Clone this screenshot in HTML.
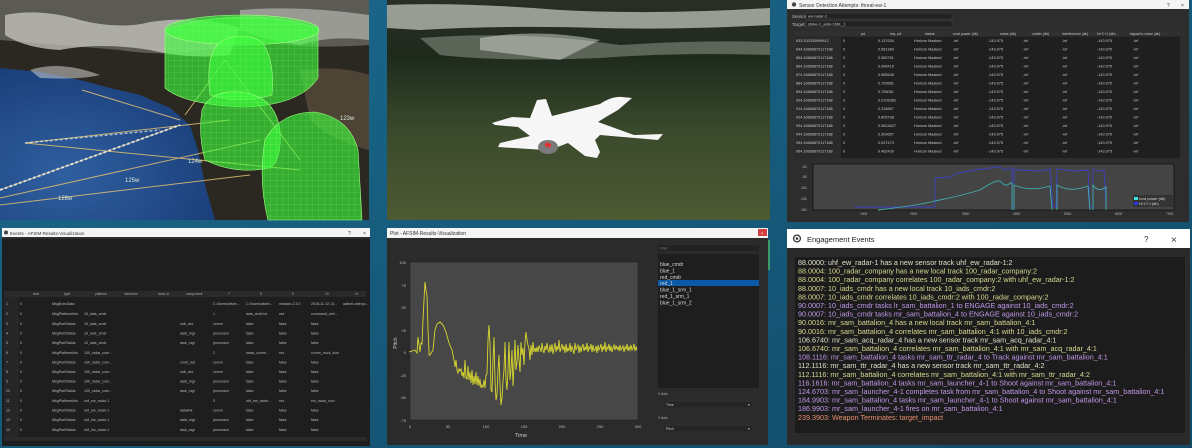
<!DOCTYPE html>
<html><head><meta charset="utf-8"><style>
html,body{margin:0;padding:0;width:1192px;height:448px;overflow:hidden;background:#17587a}
svg{display:block}
text{font-family:"Liberation Sans",sans-serif}
</style></head><body>
<svg width="1192" height="448" viewBox="0 0 1192 448" xmlns="http://www.w3.org/2000/svg">
<defs>
<linearGradient id="bg" x1="0" y1="0" x2="1" y2="1"><stop offset="0" stop-color="#1b6a8e"/><stop offset="1" stop-color="#124a68"/></linearGradient>
<linearGradient id="sky3d" x1="0" y1="0" x2="0" y2="1"><stop offset="0" stop-color="#2a2e26"/><stop offset="0.25" stop-color="#1e2a1c"/><stop offset="0.6" stop-color="#3a4a2c"/><stop offset="1" stop-color="#4d5a32"/></linearGradient>
<radialGradient id="ocean" cx="0.3" cy="0.7" r="0.8"><stop offset="0" stop-color="#2f5fa0"/><stop offset="1" stop-color="#1a3d78"/></radialGradient>
<pattern id="grid" width="6" height="6" patternUnits="userSpaceOnUse"><path d="M0 0H6M0 0V6" stroke="#a0ff80" stroke-width="0.5" fill="none"/></pattern>
</defs>
<rect width="1192" height="448" fill="url(#bg)"/>

<!-- Panel 1: map -->
<g>
<rect x="0" y="0" width="369" height="220" fill="#2a2820"/>
<path d="M0 68 L40 72 L80 80 L110 88 L140 95 L170 108 L190 125 L198 150 L205 185 L215 220 L0 220Z" fill="url(#ocean)"/>
<path d="M0 0 H369 V45 Q300 50 250 40 Q180 60 120 50 Q60 45 0 40Z" fill="#5b5a54"/>
<path d="M5 15 Q40 8 80 20 Q120 30 150 22 Q200 15 240 28 L230 55 Q190 60 150 50 Q100 42 60 50 Q25 48 5 35Z" fill="#c8c8c2" opacity="0.75"/>
<path d="M240 10 Q300 5 369 15 V40 Q330 35 300 45 Q265 40 240 30Z" fill="#b5b5b0" opacity="0.7"/>
<path d="M30 70 Q60 60 100 75 Q80 80 40 78Z" fill="#ddd" opacity="0.5"/>
<path d="M300 70 Q340 65 369 75 V150 Q330 140 310 120Z" fill="#5e5040" opacity="0.7"/>
<g stroke="#e0c070" stroke-width="1" opacity="0.85" fill="none">
<line x1="82" y1="90" x2="180" y2="120"/><line x1="25" y1="143" x2="230" y2="120"/><line x1="0" y1="190" x2="180" y2="125"/>
<line x1="0" y1="198" x2="260" y2="140"/><line x1="0" y1="205" x2="250" y2="175"/><line x1="25" y1="143" x2="300" y2="170"/>
<line x1="185" y1="115" x2="225" y2="60"/><line x1="225" y1="60" x2="300" y2="160"/>
</g>
<line x1="0" y1="190" x2="180" y2="125" stroke="#fff" stroke-width="2" stroke-dasharray="3 2" opacity="0.7"/>
<line x1="25" y1="143" x2="160" y2="130" stroke="#fff" stroke-width="1.5" stroke-dasharray="3 2" opacity="0.6"/>
<g fill="#3cff3c" fill-opacity="0.62" stroke="#9fff7f" stroke-width="0.6">
<path d="M165 30 Q240 5 318 28 L318 78 Q300 105 245 107 Q185 105 165 88Z"/>
<ellipse cx="242" cy="30" rx="77" ry="15"/>
<path d="M210 95 Q205 55 220 42 Q242 30 262 42 Q275 60 272 95 Q240 105 210 95Z"/>
<path d="M202 110 Q210 90 240 92 Q275 95 280 130 Q282 160 270 168 Q235 175 205 160 Q198 135 202 110Z"/>
<path d="M265 140 Q280 112 315 112 Q350 118 358 150 L362 220 H268 Q258 180 265 140Z"/>
</g>
<g fill="url(#grid)" opacity="0.5">
<path d="M165 30 Q240 5 318 28 L318 78 Q300 105 245 107 Q185 105 165 88Z"/>
<path d="M202 110 Q210 90 240 92 Q275 95 280 130 Q282 160 270 168 Q235 175 205 160 Q198 135 202 110Z"/>
<path d="M265 140 Q280 112 315 112 Q350 118 358 150 L362 220 H268 Q258 180 265 140Z"/>
</g>
<g fill="#d8e8d8" font-size="6" font-family="Liberation Serif"><text x="125" y="182">125w</text><text x="58" y="200">128w</text><text x="188" y="163">124w</text><text x="340" y="120">123w</text></g>
</g>

<!-- Panel 2: 3D -->
<g>
<rect x="387" y="0" width="383" height="220" fill="url(#sky3d)"/>
<path d="M387 5 Q460 2 560 10 Q660 15 770 8 V25 Q680 30 600 28 Q500 25 420 30 L387 28Z" fill="#bfc3bb" opacity="0.75"/>
<path d="M420 38 Q520 30 620 45 Q700 40 770 42 V55 Q680 52 600 58 Q500 62 440 55Z" fill="#9aa094" opacity="0.5"/>
<path d="M480 38 Q540 28 600 40 L560 60 Q520 55 480 50Z" fill="#d8dcd2" opacity="0.5"/>
<g fill="#f6f6f6">
<path d="M492 123 L512 117 L530 118 L537 100 L546 99 L552 116 L600 104 Q612 96 622 97 L632 98 L618 110 Q604 118 598 122 L634 135 L663 134 L658 140 L600 135 L595 140 L600 152 L597 158 L585 156 L568 143 L555 148 L545 150 L498 147 L500 143 L530 136 L518 127 L495 125Z"/>
</g>
<ellipse cx="548" cy="147" rx="10" ry="7" fill="#7a7a7a"/>
<rect x="545" y="143" width="6" height="4" fill="#e53030" transform="rotate(20 548 145)"/>
</g>

<!-- Panel 3: Sensor Detection -->
<g>
<rect x="787" y="0" width="402" height="222" fill="#2d2d2d"/>
<rect x="787" y="0" width="402" height="9" fill="#f4f4f4"/>
<circle cx="794" cy="4.5" r="2.2" fill="#444"/>
<text x="799" y="7" font-size="5" fill="#333">Sensor Detection Attempts: threat-ew-1</text>
<text x="1167" y="7" font-size="5" fill="#333">?</text><text x="1181" y="7" font-size="5" fill="#333">×</text>
<text x="792" y="18" font-size="4.5" fill="#bbb">Sensor:</text>
<rect x="806" y="13" width="146" height="6" fill="#222" stroke="#444" stroke-width="0.5"/><text x="808" y="17.5" font-size="4" fill="#ccc">ew radar-1</text>
<text x="792" y="26" font-size="4.5" fill="#bbb">Target:</text>
<rect x="806" y="21" width="146" height="6" fill="#222" stroke="#444" stroke-width="0.5"/><text x="808" y="25.5" font-size="4" fill="#ccc">strike-1_adm-160L_1</text>
<rect x="795" y="31" width="385" height="127" fill="#1f1f1f"/>
<rect x="795" y="31" width="385" height="5.5" fill="#303030"/>
<rect x="795" y="36" width="46" height="122" fill="#2a2a2a"/>
<g font-size="3.6" fill="#c8c8c8">
<text x="861" y="35">pd</text><text x="890" y="35">req. pd</text><text x="925" y="35">status</text><text x="953" y="35">rcvd power (db)</text><text x="1000" y="35">noise (db)</text><text x="1032" y="35">clutter (db)</text><text x="1062" y="35">interference (db)</text><text x="1097" y="35">N+C+J (db)</text><text x="1130" y="35">signal to noise (db)</text>
</g>
<g font-size="3.8" fill="#c8c8c8">
<text y="42"><tspan x="796">833.333333999812</tspan><tspan x="843">0</tspan><tspan x="878">0.137634</tspan><tspan x="914">Horizon Masked</tspan><tspan x="953">-inf</tspan><tspan x="988">-143.975</tspan><tspan x="1023">-inf</tspan><tspan x="1062">-inf</tspan><tspan x="1097">-143.975</tspan><tspan x="1133">-inf</tspan></text>
<text y="50.5"><tspan x="796">844.16666870117188</tspan><tspan x="843">0</tspan><tspan x="878">0.581384</tspan><tspan x="914">Horizon Masked</tspan><tspan x="953">-inf</tspan><tspan x="988">-143.975</tspan><tspan x="1023">-inf</tspan><tspan x="1062">-inf</tspan><tspan x="1097">-143.975</tspan><tspan x="1133">-inf</tspan></text>
<text y="59"><tspan x="796">854.16666870117188</tspan><tspan x="843">0</tspan><tspan x="878">0.580751</tspan><tspan x="914">Horizon Masked</tspan><tspan x="953">-inf</tspan><tspan x="988">-143.975</tspan><tspan x="1023">-inf</tspan><tspan x="1062">-inf</tspan><tspan x="1097">-143.975</tspan><tspan x="1133">-inf</tspan></text>
<text y="67.5"><tspan x="796">864.16666870117188</tspan><tspan x="843">0</tspan><tspan x="878">0.996415</tspan><tspan x="914">Horizon Masked</tspan><tspan x="953">-inf</tspan><tspan x="988">-143.975</tspan><tspan x="1023">-inf</tspan><tspan x="1062">-inf</tspan><tspan x="1097">-143.975</tspan><tspan x="1133">-inf</tspan></text>
<text y="76"><tspan x="796">874.16666870117188</tspan><tspan x="843">0</tspan><tspan x="878">0.985648</tspan><tspan x="914">Horizon Masked</tspan><tspan x="953">-inf</tspan><tspan x="988">-143.975</tspan><tspan x="1023">-inf</tspan><tspan x="1062">-inf</tspan><tspan x="1097">-143.975</tspan><tspan x="1133">-inf</tspan></text>
<text y="84.5"><tspan x="796">884.16666870117188</tspan><tspan x="843">0</tspan><tspan x="878">0.729581</tspan><tspan x="914">Horizon Masked</tspan><tspan x="953">-inf</tspan><tspan x="988">-143.975</tspan><tspan x="1023">-inf</tspan><tspan x="1062">-inf</tspan><tspan x="1097">-143.975</tspan><tspan x="1133">-inf</tspan></text>
<text y="93"><tspan x="796">894.16666870117188</tspan><tspan x="843">0</tspan><tspan x="878">0.728081</tspan><tspan x="914">Horizon Masked</tspan><tspan x="953">-inf</tspan><tspan x="988">-143.975</tspan><tspan x="1023">-inf</tspan><tspan x="1062">-inf</tspan><tspan x="1097">-143.975</tspan><tspan x="1133">-inf</tspan></text>
<text y="101.5"><tspan x="796">904.16666870117188</tspan><tspan x="843">0</tspan><tspan x="878">0.0106362</tspan><tspan x="914">Horizon Masked</tspan><tspan x="953">-inf</tspan><tspan x="988">-143.975</tspan><tspan x="1023">-inf</tspan><tspan x="1062">-inf</tspan><tspan x="1097">-143.975</tspan><tspan x="1133">-inf</tspan></text>
<text y="110"><tspan x="796">914.16666870117188</tspan><tspan x="843">0</tspan><tspan x="878">0.318867</tspan><tspan x="914">Horizon Masked</tspan><tspan x="953">-inf</tspan><tspan x="988">-143.975</tspan><tspan x="1023">-inf</tspan><tspan x="1062">-inf</tspan><tspan x="1097">-143.975</tspan><tspan x="1133">-inf</tspan></text>
<text y="118.5"><tspan x="796">924.16666870117188</tspan><tspan x="843">0</tspan><tspan x="878">0.805798</tspan><tspan x="914">Horizon Masked</tspan><tspan x="953">-inf</tspan><tspan x="988">-143.975</tspan><tspan x="1023">-inf</tspan><tspan x="1062">-inf</tspan><tspan x="1097">-143.975</tspan><tspan x="1133">-inf</tspan></text>
<text y="127"><tspan x="796">934.16666870117188</tspan><tspan x="843">0</tspan><tspan x="878">0.0824627</tspan><tspan x="914">Horizon Masked</tspan><tspan x="953">-inf</tspan><tspan x="988">-143.975</tspan><tspan x="1023">-inf</tspan><tspan x="1062">-inf</tspan><tspan x="1097">-143.975</tspan><tspan x="1133">-inf</tspan></text>
<text y="135.5"><tspan x="796">944.16666870117188</tspan><tspan x="843">0</tspan><tspan x="878">0.309657</tspan><tspan x="914">Horizon Masked</tspan><tspan x="953">-inf</tspan><tspan x="988">-143.975</tspan><tspan x="1023">-inf</tspan><tspan x="1062">-inf</tspan><tspan x="1097">-143.975</tspan><tspan x="1133">-inf</tspan></text>
<text y="144"><tspan x="796">954.16666870117188</tspan><tspan x="843">0</tspan><tspan x="878">0.637473</tspan><tspan x="914">Horizon Masked</tspan><tspan x="953">-inf</tspan><tspan x="988">-143.975</tspan><tspan x="1023">-inf</tspan><tspan x="1062">-inf</tspan><tspan x="1097">-143.975</tspan><tspan x="1133">-inf</tspan></text>
<text y="152.5"><tspan x="796">964.16666870117188</tspan><tspan x="843">0</tspan><tspan x="878">0.462439</tspan><tspan x="914">Horizon Masked</tspan><tspan x="953">-inf</tspan><tspan x="988">-143.975</tspan><tspan x="1023">-inf</tspan><tspan x="1062">-inf</tspan><tspan x="1097">-143.975</tspan><tspan x="1133">-inf</tspan></text>
</g>
<rect x="813" y="164" width="361" height="46" fill="#444" stroke="#111" stroke-width="0.8"/>
<g font-size="3.3" fill="#bbb"><text x="802" y="168">-60</text><text x="802" y="178">-80</text><text x="800" y="189">-100</text><text x="800" y="200">-130</text><text x="800" y="211">-150</text>
<text x="860" y="215">1000</text><text x="910" y="215">2000</text><text x="962" y="215">3000</text><text x="1013" y="215">4000</text><text x="1064" y="215">5000</text><text x="1115" y="215">6000</text><text x="1166" y="215">7000</text></g>
<path d="M855 207 L935 207 L935 178 L950 177 L955 174 L965 172 L975 170 L990 168 L1000 167 L1005 170 L1010 168 L1012 168 L1012 207 L1014 207 L1014 169 L1020 170 L1040 171 L1050 169 L1053 207 L1056 207 L1057 169 L1075 171 L1088 170 L1090 207 L1093 207 L1093 169 L1098 171 L1104 170 L1106 207" fill="none" stroke="#4040c0" stroke-width="0.9"/>
<path d="M878 210 Q920 205 935 201 Q960 196 980 190 Q995 180 1000 181 Q1006 188 1010 183 L1012 183 L1012 210 M1014 210 L1014 185 Q1030 192 1050 186 L1052 210 M1057 210 L1057 185 Q1070 193 1088 186 L1090 210 M1093 210 L1093 185 Q1098 193 1106 187 L1106 210" fill="none" stroke="#40b0b0" stroke-width="0.9"/>
<rect x="1133" y="195" width="40" height="12" fill="#333"/>
<rect x="1134" y="197" width="4" height="3" fill="#40e0e0"/><text x="1139" y="200" font-size="3.8" fill="#ddd">rcvd power (db)</text>
<rect x="1134" y="202" width="4" height="3" fill="#3030e0"/><text x="1139" y="205" font-size="3.8" fill="#ddd">N+C+J (db)</text>
</g>

<!-- Panel 4: Events -->
<g>
<rect x="2" y="228" width="368" height="218" fill="#1e1e1e"/>
<rect x="2" y="228" width="368" height="9" fill="#f4f4f4"/>
<circle cx="6" cy="232.5" r="2" fill="#444"/>
<text x="10" y="235" font-size="4.5" fill="#333">Events - AFSIM-Results-Visualization</text>
<text x="348" y="235" font-size="5" fill="#333">?</text><text x="363" y="235" font-size="5" fill="#333">×</text>
<rect x="2" y="237" width="368" height="2" fill="#2d2d2d"/>
<rect x="4" y="291" width="362" height="6" fill="#2a2a2a"/>
<g font-size="3.3" fill="#aaa"><text x="33" y="295">time</text><text x="64" y="295">type</text><text x="95" y="295">platform</text><text x="124" y="295">interactor</text><text x="158" y="295">track id</text><text x="186" y="295">component</text><text x="228" y="295">7</text><text x="260" y="295">8</text><text x="292" y="295">9</text><text x="325" y="295">10</text><text x="355" y="295">11</text></g>
<rect x="4" y="297" width="15" height="140" fill="#262626"/>
<g font-size="3.6" fill="#bbb">
<text y="305"><tspan x="6">1</tspan><tspan x="20">0</tspan><tspan x="52">MsgExecData</tspan><tspan x="213">C:/Users/afsim...</tspan><tspan x="246">C:/Users/afsim...</tspan><tspan x="279">mission-2.3.0</tspan><tspan x="311">2018-11-12 13...</tspan><tspan x="343">aafsim-interpo...</tspan></text>
<text y="315"><tspan x="6">2</tspan><tspan x="20">0</tspan><tspan x="52">MsgPlatformInfo</tspan><tspan x="84">10_iads_cmdr</tspan><tspan x="213">1</tspan><tspan x="246">iads_cmdr.txt</tspan><tspan x="279">red</tspan><tspan x="311">command_veh...</tspan></text>
<text y="325"><tspan x="6">3</tspan><tspan x="20">0</tspan><tspan x="52">MsgPartStatus</tspan><tspan x="84">10_iads_cmdr</tspan><tspan x="180">sub_net</tspan><tspan x="213">comm</tspan><tspan x="246">false</tspan><tspan x="279">false</tspan><tspan x="311">false</tspan></text>
<text y="334.5"><tspan x="6">4</tspan><tspan x="20">0</tspan><tspan x="52">MsgPartStatus</tspan><tspan x="84">10_iads_cmdr</tspan><tspan x="180">data_mgr</tspan><tspan x="213">processor</tspan><tspan x="246">false</tspan><tspan x="279">false</tspan><tspan x="311">false</tspan></text>
<text y="344"><tspan x="6">5</tspan><tspan x="20">0</tspan><tspan x="52">MsgPartStatus</tspan><tspan x="84">10_iads_cmdr</tspan><tspan x="180">task_mgr</tspan><tspan x="213">processor</tspan><tspan x="246">false</tspan><tspan x="279">false</tspan><tspan x="311">false</tspan></text>
<text y="354"><tspan x="6">6</tspan><tspan x="20">0</tspan><tspan x="52">MsgPlatformInfo</tspan><tspan x="84">100_radar_com...</tspan><tspan x="213">2</tspan><tspan x="246">ksaw_comm...</tspan><tspan x="279">red</tspan><tspan x="311">comm_truck_icon</tspan></text>
<text y="363.5"><tspan x="6">7</tspan><tspan x="20">0</tspan><tspan x="52">MsgPartStatus</tspan><tspan x="84">100_radar_com...</tspan><tspan x="180">cmdr_net</tspan><tspan x="213">comm</tspan><tspan x="246">false</tspan><tspan x="279">false</tspan><tspan x="311">false</tspan></text>
<text y="373"><tspan x="6">8</tspan><tspan x="20">0</tspan><tspan x="52">MsgPartStatus</tspan><tspan x="84">100_radar_com...</tspan><tspan x="180">sub_net</tspan><tspan x="213">comm</tspan><tspan x="246">false</tspan><tspan x="279">false</tspan><tspan x="311">false</tspan></text>
<text y="382.5"><tspan x="6">9</tspan><tspan x="20">0</tspan><tspan x="52">MsgPartStatus</tspan><tspan x="84">100_radar_com...</tspan><tspan x="180">data_mgr</tspan><tspan x="213">processor</tspan><tspan x="246">false</tspan><tspan x="279">false</tspan><tspan x="311">false</tspan></text>
<text y="392"><tspan x="6">10</tspan><tspan x="20">0</tspan><tspan x="52">MsgPartStatus</tspan><tspan x="84">100_radar_com...</tspan><tspan x="180">task_mgr</tspan><tspan x="213">processor</tspan><tspan x="246">false</tspan><tspan x="279">false</tspan><tspan x="311">false</tspan></text>
<text y="402"><tspan x="6">11</tspan><tspan x="20">0</tspan><tspan x="52">MsgPlatformInfo</tspan><tspan x="84">uhf_ew_radar-1</tspan><tspan x="213">3</tspan><tspan x="246">uhf_ew_radar...</tspan><tspan x="279">red</tspan><tspan x="311">ew_radar_icon</tspan></text>
<text y="411.5"><tspan x="6">12</tspan><tspan x="20">0</tspan><tspan x="52">MsgPartStatus</tspan><tspan x="84">uhf_ew_radar-1</tspan><tspan x="180">datalink</tspan><tspan x="213">comm</tspan><tspan x="246">false</tspan><tspan x="279">false</tspan><tspan x="311">false</tspan></text>
<text y="421"><tspan x="6">13</tspan><tspan x="20">0</tspan><tspan x="52">MsgPartStatus</tspan><tspan x="84">uhf_ew_radar-1</tspan><tspan x="180">data_mgr</tspan><tspan x="213">processor</tspan><tspan x="246">false</tspan><tspan x="279">false</tspan><tspan x="311">false</tspan></text>
<text y="431"><tspan x="6">14</tspan><tspan x="20">0</tspan><tspan x="52">MsgPartStatus</tspan><tspan x="84">uhf_ew_radar-1</tspan><tspan x="180">task_mgr</tspan><tspan x="213">processor</tspan><tspan x="246">false</tspan><tspan x="279">false</tspan><tspan x="311">false</tspan></text>
</g>
<rect x="4" y="437" width="362" height="4" fill="#2a2a2a"/>
</g>

<!-- Panel 5: Plot -->
<g>
<rect x="387" y="228" width="381" height="217" fill="#2b2b2b"/>
<rect x="387" y="228" width="381" height="10" fill="#f4f4f4"/>
<text x="390" y="235" font-size="5" fill="#333">Plot - AFSIM-Results-Visualization</text>
<rect x="758" y="229" width="9" height="7" fill="#d04040"/><text x="761" y="234.5" font-size="4" fill="#fff">×</text>
<rect x="410" y="262" width="228" height="158" fill="#474747" stroke="#222" stroke-width="0.6"/>
<g font-size="4" fill="#bbb" text-anchor="end"><text x="406" y="264">100</text><text x="406" y="287">75</text><text x="406" y="309">50</text><text x="406" y="332">25</text><text x="406" y="354">0</text><text x="406" y="377">-25</text><text x="406" y="399">-50</text><text x="406" y="422">-75</text></g>
<g font-size="4" fill="#bbb" text-anchor="middle"><text x="410" y="428">0</text><text x="448" y="428">50</text><text x="486" y="428">100</text><text x="524" y="428">150</text><text x="562" y="428">200</text><text x="600" y="428">250</text><text x="638" y="428">300</text></g>
<text x="521" y="437" font-size="5.5" fill="#ccc" text-anchor="middle">Time</text>
<text x="397" y="343" font-size="5" fill="#ccc" transform="rotate(-90 397 343)" text-anchor="middle">Pitch</text>
<polyline fill="none" stroke="#d8d830" stroke-width="0.9" points="409,352 412,351 415,350 417,353 418,337 420,352 421,343 422,344 423,320 424,300 425,282 426,290 427,296 428,330 429,350 429,355 430,355 433,350 435,330 437,324 440,322 443,325 446,332 449,343 452,350 454,360 455,367 456,360 457,370 458,373 459,369 460,371 461,369 462,376 463,372 464,378 465,360 466,378 467,379 468,366 469,380 470,372 471,383 472,370 473,385 474,376 475,384 476,372 477,385 478,376 479,386 480,379 481,388 482,385 483,387 484,380 485,388 486,375 487,374 488,340 489,325 490,345 491,390 492,392 493,360 494,337 495,380 496,400 497,395 498,370 499,355 500,385 501,405 502,398 503,381 504,370 505,342 506,380 507,390 508,370 509,342 510,380 511,370 512,350 513,386 514,365 515,340 516,370 517,362 518,345 519,360 520,372 521,342 522,355 523,348 524,365 525,342 526,332 527,340 528,345 529,349 530,360 531,345 532,355 533,342 534,352 535,348 536,352 537,347 538,352 539,346 540,348 541,352 542,343 543,350 544,353 545,346 546,350 547,343 548,350 549,352 550,345 551,352 552,344 553,354 554,348 555,343 556,352 557,346 558,350 559,340 560,352 561,348 562,344 563,350 564,346 565,353 566,344 567,352 568,348 569,351 570,343 571,352 572,346 573,350 574,354 575,343 576,350 577,347 578,345 579,353 580,346 581,352 582,347 583,344 584,351 585,347 586,350 587,343 588,352 589,347 590,349 591,344 592,352 593,345 594,351 595,350 596,346 597,353 598,345 599,350 600,348 601,344 602,352 603,346 604,350 605,342 606,352 607,347 608,349 609,344 610,351 611,346 612,352 613,348 614,345 615,350 616,346 617,349 618,347 619,351 620,345 621,350 622,348 623,346 624,352 625,347 626,349 627,344 628,351 629,347 630,350 631,345 632,350 633,348 634,344 635,351 636,347 637,350"/>
<rect x="658" y="245" width="101" height="6" fill="#222"/><text x="660" y="249.5" font-size="3.5" fill="#777">Filter</text>
<rect x="658" y="254" width="101" height="134" fill="#1e1e1e"/>
<rect x="658" y="280" width="101" height="6" fill="#0a5aa8"/>
<g font-size="5" fill="#d8d8d8"><text x="660" y="266">blue_cmdr</text><text x="660" y="272.5">blue_1</text><text x="660" y="279">red_cmdr</text><text x="660" y="285">red_1</text><text x="660" y="291.5">blue_1_srm_1</text><text x="660" y="298">red_1_srm_1</text><text x="660" y="304.5">blue_1_srm_2</text></g>
<text x="658" y="395" font-size="3.5" fill="#bbb">X Axis</text>
<rect x="663" y="401" width="90" height="7" fill="#262626" stroke="#3a3a3a" stroke-width="0.5"/><text x="666" y="406" font-size="3.5" fill="#ccc">Time</text><text x="748" y="406" font-size="3.5" fill="#ccc">▾</text>
<text x="658" y="419" font-size="3.5" fill="#bbb">Y Axis</text>
<rect x="663" y="425" width="90" height="7" fill="#262626" stroke="#3a3a3a" stroke-width="0.5"/><text x="666" y="430" font-size="3.5" fill="#ccc">Pitch</text><text x="748" y="430" font-size="3.5" fill="#ccc">▾</text>
<rect x="768" y="240" width="2" height="30" fill="#3a9a6a"/>
</g>

<!-- Panel 6: Engagement Events -->
<g>
<rect x="787" y="229" width="403" height="216" fill="#2a2a2a"/>
<rect x="787" y="229" width="403" height="19" fill="#ffffff"/>
<circle cx="797" cy="238.5" r="3.4" fill="none" stroke="#333" stroke-width="1.3"/><circle cx="797" cy="238.5" r="1.3" fill="#333"/>
<text x="807" y="242" font-size="7.5" fill="#222">Engagement Events</text>
<text x="1144" y="242" font-size="8" fill="#333">?</text>
<text x="1171" y="243" font-size="10" fill="#333">×</text>
<rect x="795" y="257" width="390" height="176" fill="#1c1c1c"/>
<g font-size="7.2" font-family="Liberation Sans">
<text x="798" y="265" fill="#e0e0c8">88.0000: uhf_ew_radar-1 has a new sensor track uhf_ew_radar-1:2</text>
<text x="798" y="273.6" fill="#d8d890">88.0004: 100_radar_company has a new local track 100_radar_company:2</text>
<text x="798" y="282.2" fill="#d8d890">88.0004: 100_radar_company correlates 100_radar_company:2 with uhf_ew_radar-1:2</text>
<text x="798" y="290.8" fill="#d8d890">88.0007: 10_iads_cmdr has a new local track 10_iads_cmdr:2</text>
<text x="798" y="299.4" fill="#d8d890">88.0007: 10_iads_cmdr correlates 10_iads_cmdr:2 with 100_radar_company:2</text>
<text x="798" y="308" fill="#c098e8">90.0007: 10_iads_cmdr tasks lr_sam_battalion_1 to ENGAGE against 10_iads_cmdr:2</text>
<text x="798" y="316.6" fill="#c098e8">90.0007: 10_iads_cmdr tasks mr_sam_battalion_4 to ENGAGE against 10_iads_cmdr:2</text>
<text x="798" y="325.2" fill="#d8d890">90.0016: mr_sam_battalion_4 has a new local track mr_sam_battalion_4:1</text>
<text x="798" y="333.8" fill="#d8d890">90.0016: mr_sam_battalion_4 correlates mr_sam_battalion_4:1 with 10_iads_cmdr:2</text>
<text x="798" y="342.4" fill="#e0e0c8">106.6740: mr_sam_acq_radar_4 has a new sensor track mr_sam_acq_radar_4:1</text>
<text x="798" y="351" fill="#d8d890">106.6740: mr_sam_battalion_4 correlates mr_sam_battalion_4:1 with mr_sam_acq_radar_4:1</text>
<text x="798" y="359.6" fill="#c098e8">108.1116: mr_sam_battalion_4 tasks mr_sam_ttr_radar_4 to Track against mr_sam_battalion_4:1</text>
<text x="798" y="368.2" fill="#e0e0c8">112.1116: mr_sam_ttr_radar_4 has a new sensor track mr_sam_ttr_radar_4:2</text>
<text x="798" y="376.8" fill="#d8d890">112.1116: mr_sam_battalion_4 correlates mr_sam_battalion_4:1 with mr_sam_ttr_radar_4:2</text>
<text x="798" y="385.4" fill="#c098e8">116.1616: mr_sam_battalion_4 tasks mr_sam_launcher_4-1 to Shoot against mr_sam_battalion_4:1</text>
<text x="798" y="394" fill="#c098e8">124.6703: mr_sam_launcher_4-1 completes task from mr_sam_battalion_4 to Shoot against mr_sam_battalion_4:1</text>
<text x="798" y="402.6" fill="#c098e8">184.9903: mr_sam_battalion_4 tasks mr_sam_launcher_4-1 to Shoot against mr_sam_battalion_4:1</text>
<text x="798" y="411.2" fill="#c098e8">186.9903: mr_sam_launcher_4-1 fires on mr_sam_battalion_4:1</text>
<text x="798" y="419.8" fill="#e89070">239.3903: Weapon Terminates: target_impact</text>
</g>
</g>
</svg>
</body></html>
